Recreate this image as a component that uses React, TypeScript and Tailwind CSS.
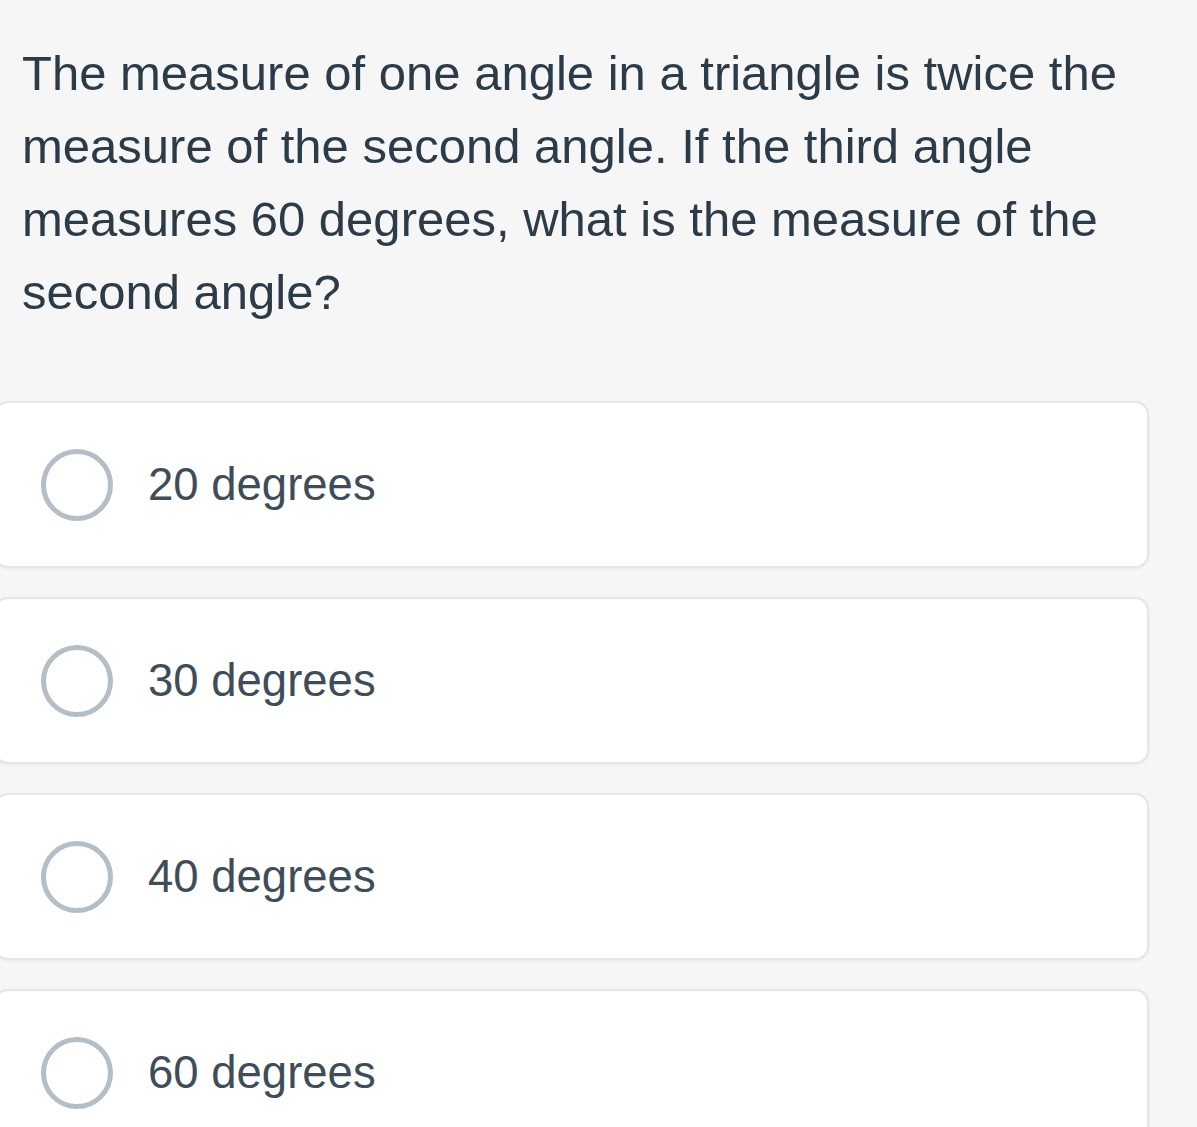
const options = ["20 degrees", "30 degrees", "40 degrees", "60 degrees"];

function Radio() {
  return (
    <span className="block h-[72px] w-[72px] shrink-0 rounded-full border-[5px] border-[#b5bec6] bg-white" />
  );
}

export default function App() {
  return (
    <div
      className="h-[1127px] w-[1197px] overflow-hidden bg-[#f6f6f6]"
      style={{ fontFamily: '"Liberation Sans", Arial, sans-serif' }}
    >
      <p className="px-[22px] pt-[37px] text-[49px] leading-[73px] text-[#2c3b48]">
        The measure of one angle in a triangle is twice the measure of the second angle. If
        the third angle measures 60 degrees, what is the measure of the second angle?
      </p>
      <div className="mt-[72px] flex flex-col gap-[29px]">
        {options.map((opt) => (
          <div
            key={opt}
            className="-ml-[6px] flex h-[167px] w-[1155px] shrink-0 items-center gap-[35px] rounded-[14px] border-2 border-[#e6e6e6] bg-white pl-[45px] shadow-[0_1px_3px_rgba(0,0,0,0.06)]"
          >
            <Radio />
            <span className="text-[45.5px] leading-none text-[#3e4d59]">{opt}</span>
          </div>
        ))}
      </div>
    </div>
  );
}
